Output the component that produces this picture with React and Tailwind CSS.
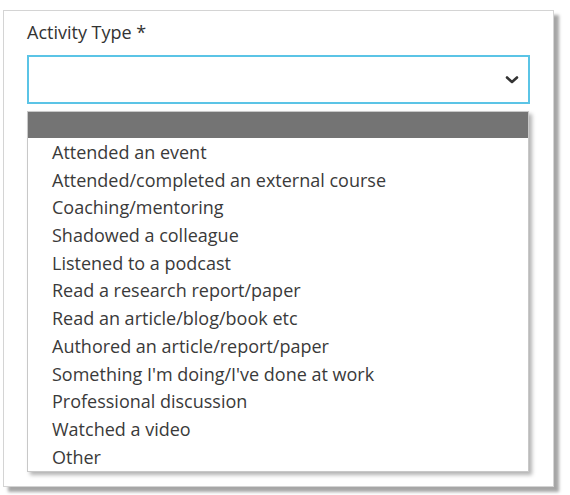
import React from "react";

const options = [
  "Attended an event",
  "Attended/completed an external course",
  "Coaching/mentoring",
  "Shadowed a colleague",
  "Listened to a podcast",
  "Read a research report/paper",
  "Read an article/blog/book etc",
  "Authored an article/report/paper",
  "Something I'm doing/I've done at work",
  "Professional discussion",
  "Watched a video",
  "Other",
];

export default function App() {
  return (
    <div
      className="w-[570px] h-[495px] bg-white pt-[10px] pl-[3px]"
      style={{ fontFamily: "'Open Sans', sans-serif" }}
    >
      <div className="w-[551px] h-[477px] bg-white border border-[#d4d4d4] shadow-[5px_5px_3px_rgba(0,0,0,0.35)] pt-[9px] px-[23px]">
        <label className="block text-[18px] leading-[25px] text-[#333]">Activity Type *</label>
        <div className="relative mt-[10px] h-[49px] border-2 border-[#5bc4e6] bg-white">
          <svg
            className="absolute right-[9px] top-[18px]"
            width="14"
            height="10"
            viewBox="0 0 14 10"
          >
            <path d="M2 2.5 L7 7 L12 2.5" fill="none" stroke="#333" strokeWidth="2.6" strokeLinecap="round" strokeLinejoin="round" />
          </svg>
        </div>
        <div className="mt-[7px] w-[502px] border border-[#c8c8c8] bg-white shadow-[3px_3px_4px_rgba(0,0,0,0.3)]">
          <div className="h-[26px] bg-[#747474]" />
          <ul className="pt-[1px]">
            {options.map((o) => (
              <li key={o} className="h-[27.7px] leading-[27.7px] pl-[24px] text-[18px] text-[#3a3a3a]">
                {o}
              </li>
            ))}
          </ul>
        </div>
      </div>
    </div>
  );
}
